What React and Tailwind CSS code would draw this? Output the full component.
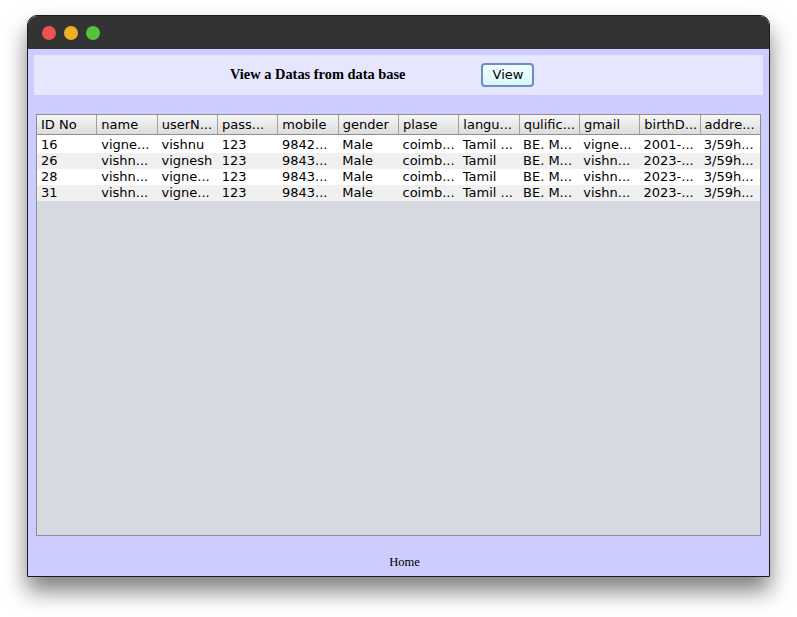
import React from 'react';

const columns = ['ID No', 'name', 'userN...', 'pass...', 'mobile', 'gender', 'plase', 'langu...', 'qulific...', 'gmail', 'birthD...', 'addre...'];

const rows = [
  ['16', 'vigne...', 'vishnu', '123', '9842...', 'Male', 'coimb...', 'Tamil ...', 'BE. M...', 'vigne...', '2001-...', '3/59h...'],
  ['26', 'vishn...', 'vignesh', '123', '9843...', 'Male', 'coimb...', 'Tamil', 'BE. M...', 'vishn...', '2023-...', '3/59h...'],
  ['28', 'vishn...', 'vigne...', '123', '9843...', 'Male', 'coimb...', 'Tamil', 'BE. M...', 'vishn...', '2023-...', '3/59h...'],
  ['31', 'vishn...', 'vigne...', '123', '9843...', 'Male', 'coimb...', 'Tamil ...', 'BE. M...', 'vishn...', '2023-...', '3/59h...'],
];

function App() {
  return (
    <div className="w-[797px] h-[617px] bg-white pt-[15px] pl-[27px]">
      {/* Window */}
      <div className="w-[743px] h-[562px] flex flex-col rounded-t-[10px] overflow-hidden border border-[#1a1a1a] shadow-[0_14px_22px_rgba(0,0,0,0.5)]">
        {/* Title bar */}
        <div className="h-[33px] bg-[#333333] flex items-center gap-[8px] pl-[14px]">
          <div className="w-[14px] h-[14px] rounded-full bg-[#ec5350]" />
          <div className="w-[14px] h-[14px] rounded-full bg-[#f0b023]" />
          <div className="w-[14px] h-[14px] rounded-full bg-[#53c43a]" />
        </div>

        {/* Content */}
        <div className="flex-1 bg-[#ccccff] flex flex-col px-[6px] pt-[6px]" style={{ fontFamily: '"DejaVu Sans", sans-serif' }}>
          <div className="h-[40px] bg-[#e6e6ff] flex items-center pl-[196px]">
            <span className="font-bold text-[14.4px] text-black" style={{ fontFamily: '"Liberation Serif", serif' }}>
              View a Datas from data base
            </span>
            <button className="ml-[76px] w-[53px] h-[24px] -mt-[1px] rounded-[4px] border-2 border-[#6b90bf] bg-gradient-to-b from-[#f2ffff] to-[#d8f6fb] text-[13px] text-black leading-none">
              View
            </button>
          </div>

          <div className="h-[19px]" />

          {/* Table */}
          <div className="ml-[2px] w-[725px] h-[422px] border border-[#8e8e8e] bg-[#d6d9e0] flex flex-col">
            <div className="h-[20px] flex bg-gradient-to-b from-[#f7f7f7] to-[#dcdcdc] border-b border-[#8e8e8e]">
              {columns.map((c, i) => (
                <div key={i} className="flex-1 border-r border-[#a0a0a0] last:border-r-0 px-[4px] flex items-center text-[13px] text-black whitespace-nowrap overflow-hidden">
                  {c}
                </div>
              ))}
            </div>
            <div className="h-[2px] bg-white" />
            {rows.map((r, ri) => (
              <div key={ri} className={`h-[16px] flex ${ri % 2 === 0 ? 'bg-white' : 'bg-[#f0f0f0]'}`}>
                {r.map((v, i) => (
                  <div key={i} className="flex-1 px-[4px] flex items-center text-[13px] text-black whitespace-nowrap overflow-hidden">
                    {v}
                  </div>
                ))}
              </div>
            ))}
          </div>

          <div className="flex-1 flex items-center justify-center pt-[12px] pl-[12px]">
            <span className="text-[12.5px] text-black" style={{ fontFamily: '"Liberation Serif", serif' }}>Home</span>
          </div>
        </div>
      </div>
    </div>
  );
}

export default App;
